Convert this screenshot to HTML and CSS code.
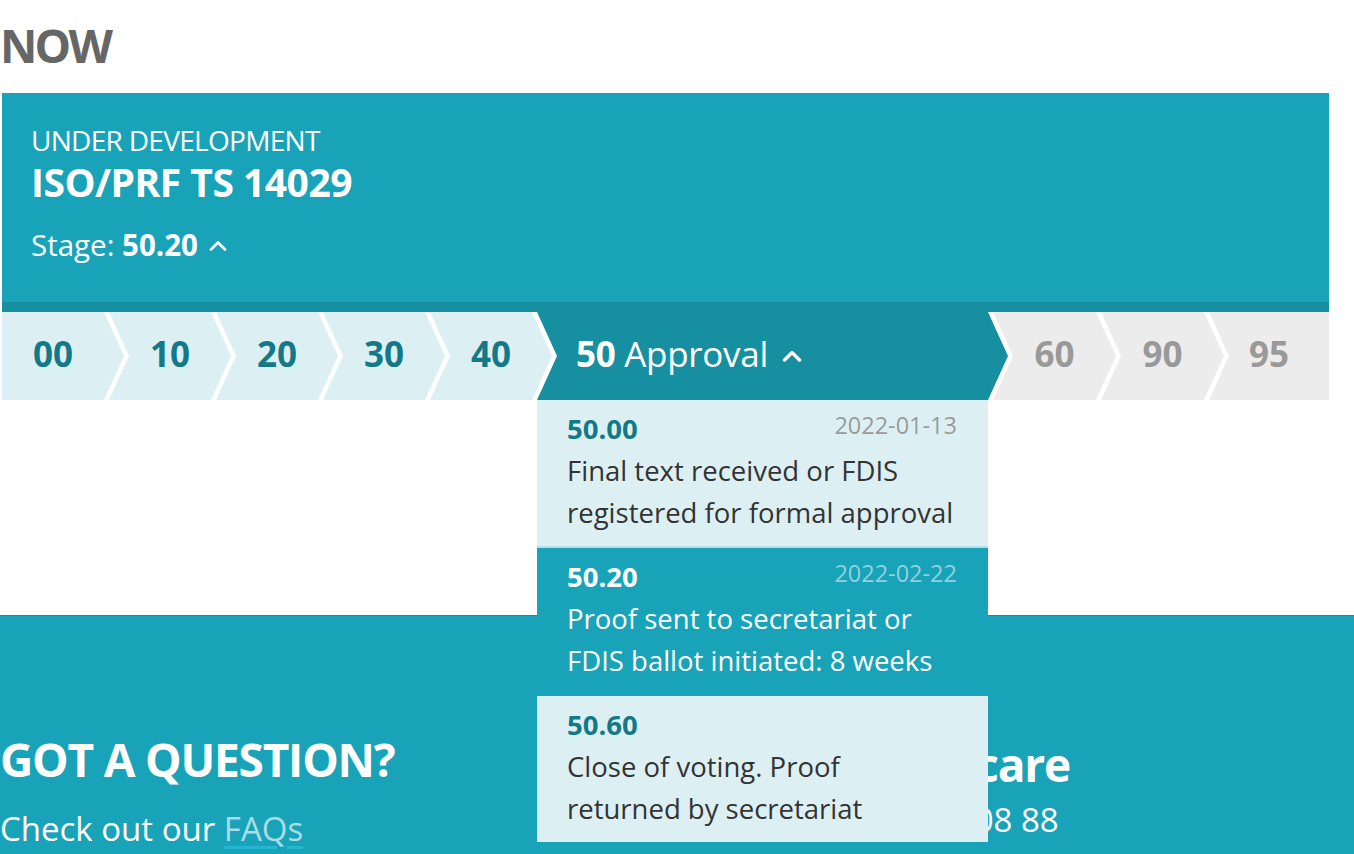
FILE: index.html
```html
<!DOCTYPE html>
<html lang="en">
<head>
<meta charset="utf-8">
<title>ISO/PRF TS 14029 – Life cycle</title>
<link rel="stylesheet" href="styles.css">
</head>
<body>
<main class="page">
  <h2 class="now-title">NOW</h2>
  <section class="status-panel">
    <div class="status-label">UNDER DEVELOPMENT</div>
    <div class="status-ref">ISO/PRF TS 14029</div>
    <div class="status-stage">Stage: <strong>50.20</strong><svg class="caret caret-sm" viewBox="0 0 18 11" width="18" height="11" aria-hidden="true"><polyline points="2,9.5 9,2.5 16,9.5"/></svg></div>
  </section>
  <div class="band"></div>
  <nav class="steps">
    <div class="step done first">00</div>
    <div class="step done">10</div>
    <div class="step done">20</div>
    <div class="step done">30</div>
    <div class="step done">40</div>
    <div class="step active">
      <span class="step-label"><b>50</b> Approval<svg class="caret caret-lg" viewBox="0 0 20 12" width="20" height="12" aria-hidden="true"><polyline points="2.5,10 10,2.5 17.5,10"/></svg></span>
      <ul class="stage-menu">
        <li class="stage-item">
          <div class="stage-head"><b>50.00</b><span class="stage-date">2022-01-13</span></div>
          <p>Final text received or FDIS<br>registered for formal approval</p>
        </li>
        <li class="stage-item current">
          <div class="stage-head"><b>50.20</b><span class="stage-date">2022-02-22</span></div>
          <p>Proof sent to secretariat or<br>FDIS ballot initiated: 8 weeks</p>
        </li>
        <li class="stage-item">
          <div class="stage-head"><b>50.60</b></div>
          <p>Close of voting. Proof<br>returned by secretariat</p>
        </li>
      </ul>
    </div>
    <div class="step todo">60</div>
    <div class="step todo">90</div>
    <div class="step todo last">95</div>
  </nav>
</main>
<footer class="site-footer">
  <div class="foot-col">
    <h3 class="foot-title">GOT A QUESTION?</h3>
    <p class="foot-text">Check out our <a href="#" class="foot-link">FAQs</a></p>
  </div>
  <div class="foot-col care">
    <h3 class="foot-title">Customer care</h3>
    <p class="foot-text phone">+41 22 749 08 88</p>
  </div>
</footer>
</body>
</html>
```

FILE: styles.css
```css
:root {
  --teal: #19a3b8;
  --teal-dark: #168fa1;
  --teal-light: #dcf0f4;
  --step-grey: #ececec;
  --num-dark: #137887;
  --num-grey: #999999;
}

* { box-sizing: border-box; }

html, body { margin: 0; padding: 0; }

body {
  font-family: "Open Sans", "Noto Sans", sans-serif;
  background: #ffffff;
  color: #333333;
}

.page {
  width: 1329px;
  padding: 17px 0 0 2px;
}

.now-title {
  margin: 0 0 20px -2px;
  font-size: 46px;
  line-height: 56px;
  font-weight: 700;
  letter-spacing: -2.8px;
  color: #666666;
}

/* status panel */
.status-panel {
  background: var(--teal);
  color: #ffffff;
  padding: 29px 29px 38px;
}

.status-label {
  font-size: 28px;
  line-height: 36px;
  font-weight: 400;
  letter-spacing: -0.7px;
}

.status-ref {
  font-size: 39px;
  line-height: 46px;
  font-weight: 700;
  letter-spacing: -0.5px;
  margin-top: 1px;
}

.status-stage {
  margin-top: 21px;
  font-size: 29.5px;
  line-height: 38px;
}

.status-stage strong { font-weight: 700; }

.caret {
  fill: none;
  stroke: #ffffff;
  stroke-linecap: round;
  stroke-linejoin: round;
}

.caret-sm {
  stroke-width: 2.6;
  margin-left: 11px;
  vertical-align: 5px;
}

.caret-lg {
  stroke-width: 3.4;
  margin-left: 14px;
  vertical-align: 5px;
}

.band {
  height: 10px;
  background: var(--teal-dark);
}

/* step chevrons */
.steps {
  display: flex;
  height: 88px;
}

.step {
  position: relative;
  z-index: 0;
  flex: none;
  width: 122px;
  height: 88px;
  margin-left: -15px;
  padding-bottom: 5px;
  display: flex;
  align-items: center;
  justify-content: center;
  font-size: 35px;
  line-height: 44px;
  font-weight: 700;
}

.step::before {
  content: "";
  position: absolute;
  inset: 0;
  z-index: -1;
  background: var(--bg);
  clip-path: polygon(0 0, calc(100% - 20px) 0, 100% 50%, calc(100% - 20px) 100%, 0 100%, 20px 50%);
}

.step.first {
  margin-left: 0;
  padding-right: 20px;
}

.step.first::before {
  clip-path: polygon(0 0, calc(100% - 20px) 0, 100% 50%, calc(100% - 20px) 100%, 0 100%);
}

.step.last::before {
  clip-path: polygon(0 0, 100% 0, 100% 100%, 0 100%, 20px 50%);
}

.step.done {
  --bg: var(--teal-light);
  color: var(--num-dark);
}

.step.todo {
  --bg: var(--step-grey);
  color: var(--num-grey);
  width: 123px;
}

.step.todo.last { width: 120px; }

.step.active {
  --bg: var(--teal-dark);
  z-index: 2;
  width: 471px;
  justify-content: flex-start;
  padding-left: 39px;
  color: #ffffff;
  font-weight: 400;
}

.step-label { letter-spacing: -0.3px; }

.step-label b { font-weight: 700; }

/* dropdown of sub-stages */
.stage-menu {
  position: absolute;
  top: 100%;
  left: 0;
  width: 451px;
  margin: 0;
  padding: 0;
  list-style: none;
  font-size: 27.5px;
  line-height: 42px;
  font-weight: 400;
}

.stage-item {
  background: var(--teal-light);
  color: #333333;
  padding: 8px 31px 12px 30px;
}

.stage-item:first-child {
  border-bottom: 2px solid #b6dee6;
}

.stage-item.current {
  background: var(--teal);
  color: #ffffff;
  padding-bottom: 14px;
}

.stage-head {
  display: flex;
  justify-content: space-between;
  align-items: flex-start;
}

.stage-head b {
  font-weight: 700;
  color: var(--num-dark);
}

.stage-item.current .stage-head b { color: #ffffff; }

.stage-date {
  font-size: 23.5px;
  line-height: 35px;
  color: #9b9b9b;
}

.stage-item.current .stage-date { color: #8fd2dd; }

.stage-item p {
  margin: 0 -6px 0 0;
  white-space: nowrap;
}

/* footer */
.site-footer {
  margin-top: 215px;
  min-height: 260px;
  background: var(--teal);
  border-top: 1px solid var(--teal-dark);
  color: #ffffff;
  display: grid;
  grid-template-columns: 750px 1fr;
  padding: 115px 0 40px 0;
}

.foot-title {
  margin: 0;
  font-size: 46px;
  line-height: 56px;
  font-weight: 700;
  letter-spacing: -1.2px;
}

.foot-text {
  margin: 20px 0 0;
  font-size: 33px;
  line-height: 44px;
}

.foot-link {
  color: #a9dce5;
  text-decoration: underline;
  text-decoration-color: #22b8d3;
  text-decoration-thickness: 3px;
  text-underline-offset: 5px;
}

.care .foot-title { margin-top: 5px; }

.care .phone {
  margin-top: 6px;
  padding-left: 48px;
}
```
